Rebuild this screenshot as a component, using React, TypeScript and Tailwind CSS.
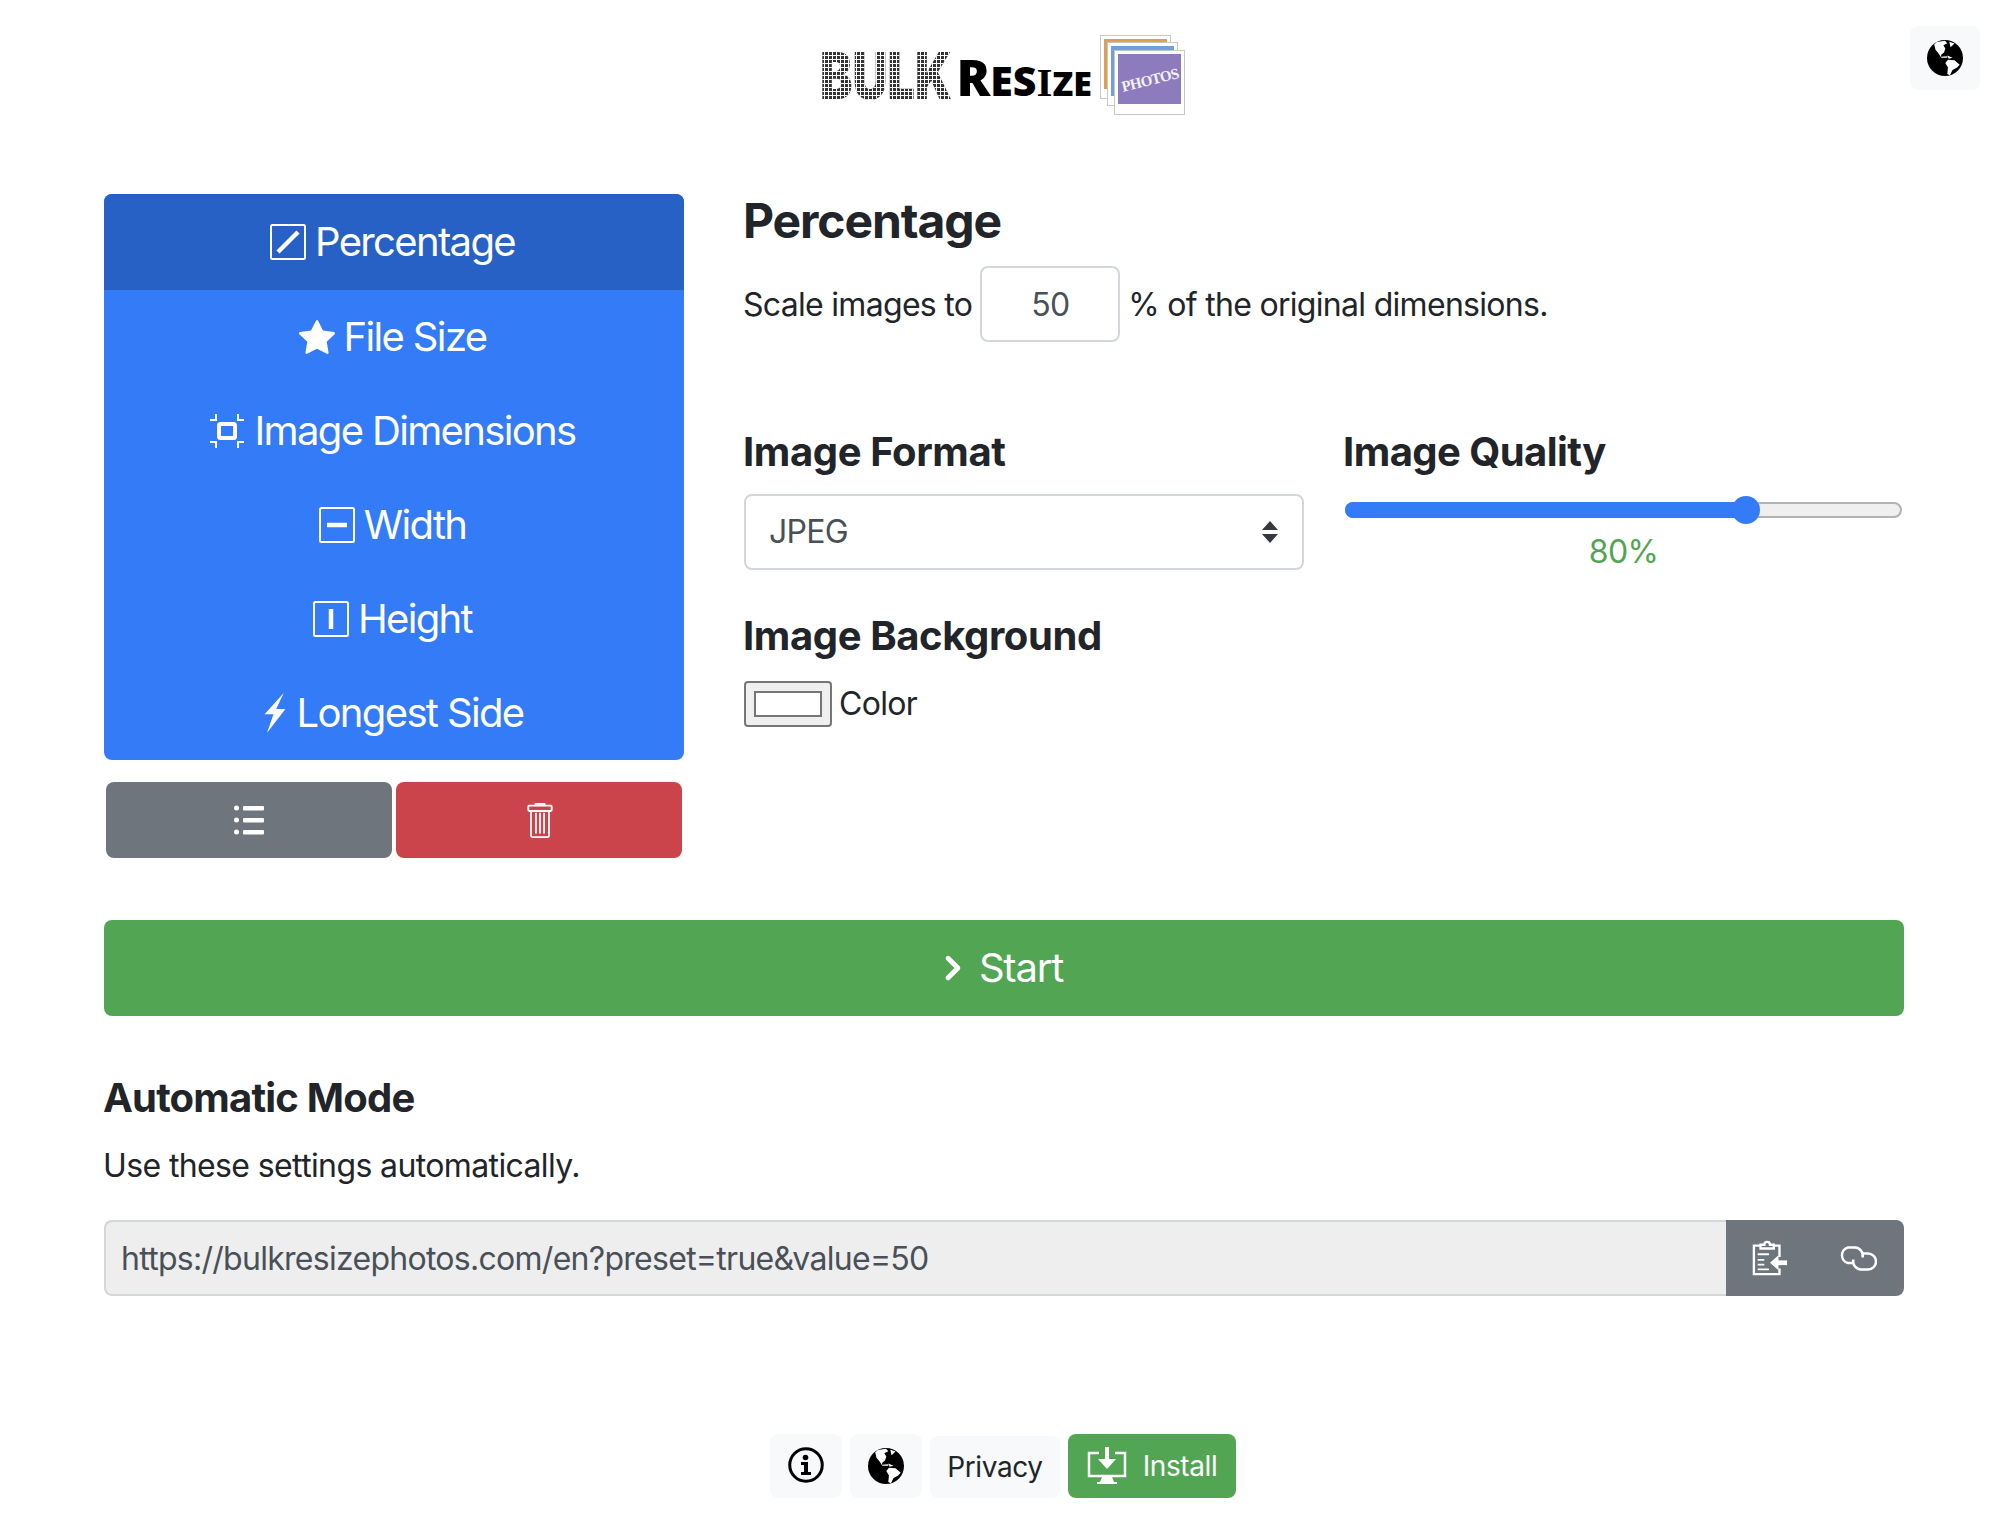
import { BsChevronRight, BsStarFill } from "react-icons/bs";

const SquareIcon = ({ kind }: { kind: "slash" | "dash" | "bar" }) => (
  <svg viewBox="0 0 36 36" className="w-[36px] h-[36px] shrink-0" fill="none" stroke="#fff">
    <rect x="1" y="1" width="34" height="34" rx="1.5" strokeWidth="2" />
    {kind === "slash" && <path d="M8 28 28 8" strokeWidth="4.500" />}
    {kind === "dash" && <path d="M8 18h20" strokeWidth="4.500" />}
    {kind === "bar" && <path d="M18 8v20" strokeWidth="4.500" />}
  </svg>
);

const DimensionsIcon = () => (
  <svg viewBox="0 0 36 36" className="w-[36px] h-[36px] shrink-0" fill="none" stroke="#fff" strokeWidth="2">
    <path d="M1 7h6V1M29 1v6h6M1 29h6v6M29 35v-6h6" />
    <rect x="10" y="11" width="16" height="14" rx="1.500" strokeWidth="4" />
  </svg>
);

const BoltIcon = () => (
  <svg viewBox="0 0 61 117" className="w-[26px] h-[40px] shrink-0" fill="#fff">
    <path d="M56 0 0 62h26L7 117 61 47H34z" />
  </svg>
);

const ListIcon = () => (
  <svg viewBox="0 0 30 30" className="w-[30px] h-[30px]" fill="#fff">
    <circle cx="2.500" cy="3" r="2.500" />
    <circle cx="2.500" cy="15" r="2.500" />
    <circle cx="2.500" cy="27" r="2.500" />
    <rect x="9" y="1" width="21" height="4.500" rx="1" />
    <rect x="9" y="13" width="21" height="4.500" rx="1" />
    <rect x="9" y="25" width="21" height="4.500" rx="1" />
  </svg>
);

const TrashIcon = () => (
  <svg viewBox="0 0 28 40" className="w-[28px] h-[36px] ml-[2px]" fill="none" stroke="#fff" strokeWidth="2">
    <path d="M9 4V2h10v2" />
    <rect x="1" y="4" width="26" height="6" rx="1" />
    <path d="M4 10v27a2 2 0 0 0 2 2h16a2 2 0 0 0 2-2V10M9.500 12v23M14 12v23M18.500 12v23" />
  </svg>
);

const ClipboardIcon = () => (
  <svg viewBox="0 0 38 38" className="w-[36px] h-[36px]" fill="none" stroke="#fff" strokeWidth="2.500">
    <path d="M9 6H2v30h27v-6M23 6h6v12" />
    <path d="M9 9V5h4a3 3 0 0 1 6 0h4v4z" />
    <path d="M6 15h12M6 21h7M6 26h7M6 31h12" strokeWidth="2" />
    <path d="M37 24H22" strokeWidth="5" />
    <path d="M28 16l-9 8 9 8z" fill="#fff" stroke="none" />
  </svg>
);

const LinkIcon = () => (
  <svg viewBox="0 0 38 25" className="w-[38px] h-[25px] mr-[1px]" fill="none" stroke="#fff" strokeWidth="2.500">
    <path d="M15 17H9A8 8 0 0 1 9 1.500h7a8 8 0 0 1 7.500 10" />
    <path d="M23 7.500h6a8 8 0 0 1 0 16h-7a8 8 0 0 1-7.500-10" />
  </svg>
);

const InstallIcon = () => (
  <svg viewBox="0 0 40 38" className="w-[40px] h-[38px]" fill="none" stroke="#fff">
    <path d="M12 6H2v23h36V6H28" strokeWidth="2.500" />
    <path d="M20 0v14" strokeWidth="4" />
    <path d="M11 12h18l-9 10z" fill="#fff" stroke="none" />
    <path d="M15 30h10l2 5h3v2H10v-2h3z" fill="#fff" stroke="none" />
  </svg>
);

const GlobeIcon = () => (
  <svg viewBox="0 0 110 110" className="w-[36px] h-[36px]">
    <circle cx="55" cy="55" r="55" fill="#000" />
    <g fill="#fff">
      <path d="M22 14 30 6 55 2 62 10 50 16 56 26 52 38 44 44 42 52 36 42 26 30z" />
      <path d="M42 51 62 50 62 54 44 54z" />
      <path d="M62 47 78 54 66 57z" />
      <path d="M64 60 84 62 100 76 92 84 78 92 70 108 62 104 64 84 56 70z" />
      <path d="M68 5 84 11 72 22z" />
    </g>
  </svg>
);

const InfoIcon = () => (
  <svg viewBox="0 0 36 36" className="w-[36px] h-[36px] mt-[-3px]" fill="#000">
    <circle cx="18" cy="18" r="16.250" fill="none" stroke="#000" strokeWidth="3" />
    <circle cx="17.500" cy="10.500" r="2.800" />
    <path d="M13 15h7v10h3v3H13v-3h3v-7h-3z" />
  </svg>
);

const Logo = () => (
  <div className="flex items-center h-[80px]">
    <div className="w-[130px] h-[48px] overflow-visible">
      <span className="block origin-top-left scale-x-[0.76] text-[64px] leading-[48px] font-black font-['Inter',sans-serif] tracking-normal text-transparent bg-clip-text w-[180px] bg-[repeating-linear-gradient(0deg,#fff_0,#fff_1.3px,transparent_1.3px,transparent_4px),repeating-linear-gradient(90deg,#fff_0,#fff_1.6px,transparent_1.6px,transparent_5.26px),linear-gradient(#333,#333)]">
        BULK
      </span>
    </div>
    <div className="ml-[7px] w-[133px] font-['Open_Sans',sans-serif] font-extrabold text-black leading-none tracking-normal whitespace-nowrap mt-[2px]">
      <span className="text-[50px]">R</span>
      <span className="text-[41px]">ES</span>
      <span className="text-[41px] font-['Liberation_Serif',serif] font-bold">I</span>
      <span className="text-[34px]">ZE</span>
    </div>
    <svg viewBox="0 0 85 80" className="w-[85px] h-[80px] ml-[10px] mt-[-3px]">
      <rect x="0.500" y="0.500" width="70" height="63" fill="#fff" stroke="#c8c8c8" />
      <rect x="4" y="4" width="63" height="50" fill="#e09f4f" />
      <rect x="7.500" y="7.500" width="70" height="63" fill="#fff" stroke="#c8c8c8" />
      <rect x="11" y="11" width="63" height="50" fill="#729fdc" />
      <rect x="14.500" y="15.500" width="70" height="64" fill="#fff" stroke="#c8c8c8" />
      <rect x="18" y="19" width="63" height="50" fill="#8d7cbd" />
      <text x="50" y="50" textAnchor="middle" transform="rotate(-14 50 45)" fontSize="15" fontWeight="700" fill="#f3f0fa" fontFamily="'Liberation Serif', serif">PHOTOS</text>
    </svg>
  </div>
);

const navItems = [
  { label: "Percentage", icon: <SquareIcon kind="slash" />, active: true },
  { label: "File Size", icon: <BsStarFill className="w-[36px] h-[36px] shrink-0" /> },
  { label: "Image Dimensions", icon: <DimensionsIcon /> },
  { label: "Width", icon: <SquareIcon kind="dash" /> },
  { label: "Height", icon: <SquareIcon kind="bar" /> },
  { label: "Longest Side", icon: <BoltIcon /> },
];

export default function App() {
  return (
    <div className="relative min-h-[1536px] bg-white font-['Inter',sans-serif] text-[#212529] text-[32px] tracking-[-0.7px] overflow-hidden">
      <button className="absolute right-[26px] top-[26px] w-[70px] h-[64px] rounded-lg bg-[#f8f9fa] flex items-center justify-center">
        <GlobeIcon />
      </button>

      <header className="flex justify-center pt-[36px] pr-[2px] h-[194px]">
        <Logo />
      </header>

      <main className="px-[104px] w-[2008px]">
        <div className="flex gap-[59px] h-[726px]">
          <div className="w-[580px] shrink-0">
            <nav className="rounded-lg overflow-hidden bg-[#347bf7] text-white">
              {navItems.map((item) => (
                <div
                  key={item.label}
                  className={`flex items-center justify-center gap-[9px] text-[40px] tracking-[-1.65px] h-[94px] pr-[3px] ${item.active ? "bg-[#2861c5] h-[96px]" : ""}`}
                >
                  {item.icon}
                  <span>{item.label}</span>
                </div>
              ))}
            </nav>
            <div className="flex gap-[4px] mt-[22px] px-[2px]">
              <button className="flex-1 h-[76px] rounded-lg bg-[#6e757c] flex items-center justify-center">
                <ListIcon />
              </button>
              <button className="flex-1 h-[76px] rounded-lg bg-[#cc444b] flex items-center justify-center">
                <TrashIcon />
              </button>
            </div>
          </div>

          <div className="flex-1">
            <h1 className="text-[48px] leading-[58px] font-bold tracking-[-1.1px] mt-[-2px]">Percentage</h1>
            <div className="flex items-center gap-[8px] mt-[16px] h-[76px]">
              <span className="pt-[2px]">Scale images to</span>
              <div className="w-[140px] h-[76px] pt-[2px] rounded-lg border-2 border-[#d3d7db] flex items-center justify-center text-[#495057]">50</div>
              <span className="pt-[2px]">% of the original dimensions.</span>
            </div>

            <div className="flex gap-[38px] mt-[86px]">
              <div className="w-[561px] shrink-0">
                <h2 className="text-[40px] leading-[48px] font-bold tracking-[-0.4px]">Image Format</h2>
                <div className="mt-[18px] ml-[1px] h-[76px] rounded-lg border-2 border-[#d3d7db] flex items-center justify-between pl-[23px] pr-[24px] text-[#495057]">
                  <span>JPEG</span>
                  <svg viewBox="0 0 16 24" className="w-[16px] h-[24px]" fill="#343a40">
                    <path d="M8 1 16 10H0zM8 23 0 14h16z" />
                  </svg>
                </div>
                <h2 className="text-[40px] leading-[48px] font-bold tracking-[-0.4px] mt-[42px]">Image Background</h2>
                <div className="flex items-center gap-[7px] mt-[20px] ml-[1px]">
                  <div className="w-[88px] h-[46px] rounded-[4px] border-2 border-[#767676] bg-[#efefef] p-[8px]">
                    <div className="w-full h-full border-2 border-[#767676] bg-white" />
                  </div>
                  <span>Color</span>
                </div>
              </div>
              <div className="flex-1">
                <h2 className="text-[40px] leading-[48px] font-bold tracking-[-0.55px] ml-[1px]">Image Quality</h2>
                <div className="relative mt-[26px] h-[16px] w-[557px] ml-[3px] rounded-full bg-[#efefef] border-2 border-[#b2b2b2]">
                  <div className="absolute left-[-2px] top-[-2px] h-[16px] w-[400px] rounded-full bg-[#347bf7]" />
                  <div className="absolute left-[385px] top-[-8px] w-[28px] h-[28px] rounded-full bg-[#347bf7]" />
                </div>
                <div className="text-center text-[#52a552] mt-[10px] w-[557px] ml-[3px]">80%</div>
              </div>
            </div>
          </div>
        </div>

        <button className="w-full h-[96px] rounded-lg bg-[#52a552] text-white text-[40px] tracking-[-1.2px] flex items-center justify-center gap-[13px] pr-[5px]">
          <BsChevronRight className="w-[26px] h-[26px] stroke-[2] stroke-white" />
          <span>Start</span>
        </button>

        <h2 className="text-[40px] leading-[48px] font-bold tracking-[-0.8px] mt-[58px] ml-[-1px]">Automatic Mode</h2>
        <p className="mt-[24px] leading-[40px] ml-[-1px] tracking-[-0.62px]">Use these settings automatically.</p>
        <div className="flex h-[76px] mt-[34px]">
          <div className="flex-1 bg-[#eeeeee] border-2 border-r-0 border-[#d3d7db] rounded-l-lg flex items-center pl-[15px] pt-[2px] tracking-[-0.72px] text-[#495057]">
            https://bulkresizephotos.com/en?preset=true&amp;value=50
          </div>
          <div className="w-[178px] bg-[#6e757c] rounded-r-lg flex items-center justify-between pl-[26px] pr-[26px]">
            <ClipboardIcon />
            <LinkIcon />
          </div>
        </div>

        <footer className="flex justify-center items-end gap-[8px] mt-[138px] pr-[2px]">
          <div className="w-[72px] h-[64px] rounded-lg bg-[#f8f9fa] flex items-center justify-center">
            <InfoIcon />
          </div>
          <div className="w-[72px] h-[64px] rounded-lg bg-[#f8f9fa] flex items-center justify-center">
            <GlobeIcon />
          </div>
          <div className="w-[130px] h-[62px] rounded-lg bg-[#f8f9fa] flex items-center justify-center text-[28px] tracking-[-0.4px]">Privacy</div>
          <div className="w-[168px] h-[64px] rounded-lg bg-[#52a552] flex items-center justify-center gap-[16px] text-[28px] tracking-[-0.4px] text-white">
            <InstallIcon />
            <span>Install</span>
          </div>
        </footer>
      </main>
    </div>
  );
}
